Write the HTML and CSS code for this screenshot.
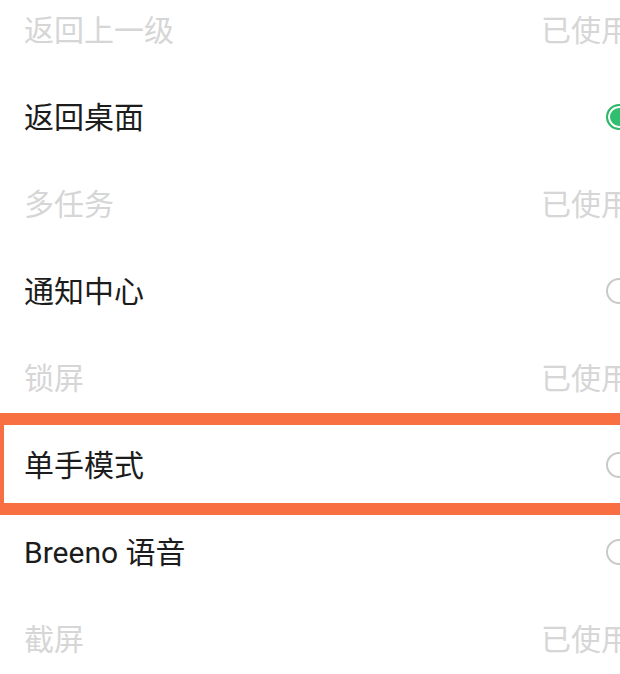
FILE: index.html
```html
<!DOCTYPE html>
<html lang="zh-CN">
<head>
<meta charset="utf-8">
<title>按键设置</title>
<link rel="stylesheet" href="styles.css">
</head>
<body>
<ul class="list">
  <li class="row disabled"><span class="label">返回上一级</span><span class="status">已使用</span></li>
  <li class="row"><span class="label">返回桌面</span><span class="radio checked"></span></li>
  <li class="row disabled"><span class="label">多任务</span><span class="status">已使用</span></li>
  <li class="row"><span class="label">通知中心</span><span class="radio"></span></li>
  <li class="row disabled"><span class="label">锁屏</span><span class="status">已使用</span></li>
  <li class="row highlighted"><span class="label">单手模式</span><span class="radio"></span><span class="highlight"></span></li>
  <li class="row"><span class="label">Breeno 语音</span><span class="radio"></span></li>
  <li class="row disabled"><span class="label">截屏</span><span class="status">已使用</span></li>
</ul>
</body>
</html>
```
FILE: styles.css
```css
html, body {
  margin: 0;
  padding: 0;
  background: #ffffff;
  overflow: hidden;
}
body {
  width: 620px;
  height: 674px;
  font-family: Roboto, "Noto Sans CJK SC", sans-serif;
}
.list {
  list-style: none;
  margin: -13px 0 0 0;
  padding: 0;
  width: 633px;
}
.row {
  position: relative;
  height: 87px;
  display: flex;
  align-items: center;
  justify-content: space-between;
  padding-left: 24px;
  box-sizing: border-box;
  color: #1c1c1c;
  font-size: 30px;
}
.label {
  line-height: 1;
}
.disabled {
  color: #d6d6d6;
}
.status {
  line-height: 1;
  color: #d6d6d6;
  margin-right: 2px;
}
.radio {
  width: 26px;
  height: 26px;
  box-sizing: border-box;
  border-radius: 50%;
  border: 2px solid #c9c9c9;
  margin-right: 1px;
  margin-top: -2px;
}
.radio.checked {
  border: 2px solid #2fb86a;
  background: #2fbf6e;
  box-shadow: inset 0 0 0 2px #ffffff;
}
.highlight {
  position: absolute;
  top: -9px;
  left: 0;
  right: -20px;
  height: 102px;
  box-sizing: border-box;
  border-top: 12px solid #f76f42;
  border-bottom: 12px solid #f76f42;
  border-left: 4px solid #f76f42;
  pointer-events: none;
}
```
